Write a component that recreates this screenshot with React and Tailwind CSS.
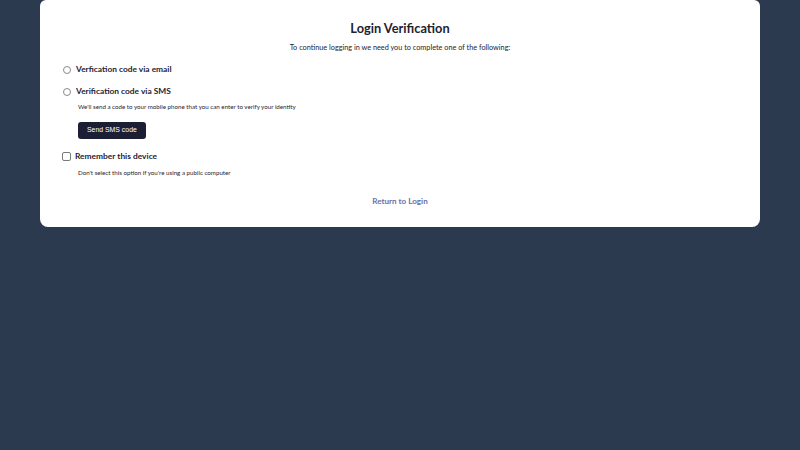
export default function App() {
  return (
    <div className="min-h-[450px] w-full bg-[#2c3a4f] font-['Lato','Noto_Sans',sans-serif] text-[#1f2230]">
      <div className="mx-10 rounded-b-lg rounded-t-md bg-white px-[22px] pb-[20px] pt-[19px]">
        <h1 className="text-center text-[12.8px] font-bold leading-[18px]">Login Verification</h1>
        <p className="mt-[6px] text-center text-[7.3px] leading-[10px]">
          To continue logging in we need you to complete one of the following:
        </p>

        <div className="mt-[10px] flex flex-col">
          <label className="ml-[1px] flex h-[12px] items-center gap-[5px]">
            <span className="mt-[2px] h-[8px] w-[8px] rounded-full border border-[#8a8a8a] bg-white" />
            <span className="text-[8.4px] font-bold leading-[12px]">Verfication code via email</span>
          </label>

          <label className="ml-[1px] mt-[10px] flex h-[12px] items-center gap-[5px]">
            <span className="mt-[2px] h-[8px] w-[8px] rounded-full border border-[#8a8a8a] bg-white" />
            <span className="text-[8.4px] font-bold leading-[12px]">Verification code via SMS</span>
          </label>
          <p className="ml-[16px] mt-[5px] text-[6.2px] leading-[9px]">
            We'll send a code to your mobile phone that you can enter to verify your identity
          </p>
          <div className="ml-[16px] mt-[11px] flex">
            <button className="h-[17px] rounded-[3px] bg-[#1c1e33] px-[9px] font-['Liberation_Sans',sans-serif] text-[6.9px] text-white">
              Send SMS code
            </button>
          </div>

          <label className="mt-[11px] flex h-[12px] items-center gap-[4px]">
            <span className="h-[9px] w-[9px] rounded-[2px] border border-[#7a7a7a] bg-white" />
            <span className="text-[8.4px] font-bold leading-[12px]">Remember this device</span>
          </label>
          <p className="ml-[16px] mt-[6px] text-[6.2px] leading-[9px]">
            Don't select this option if you're using a public computer
          </p>
        </div>

        <div className="mt-[19px] flex justify-center">
          <a className="text-[8.1px] font-bold leading-[11px] text-[#6a6fa6]">Return to Login</a>
        </div>
      </div>
    </div>
  );
}
